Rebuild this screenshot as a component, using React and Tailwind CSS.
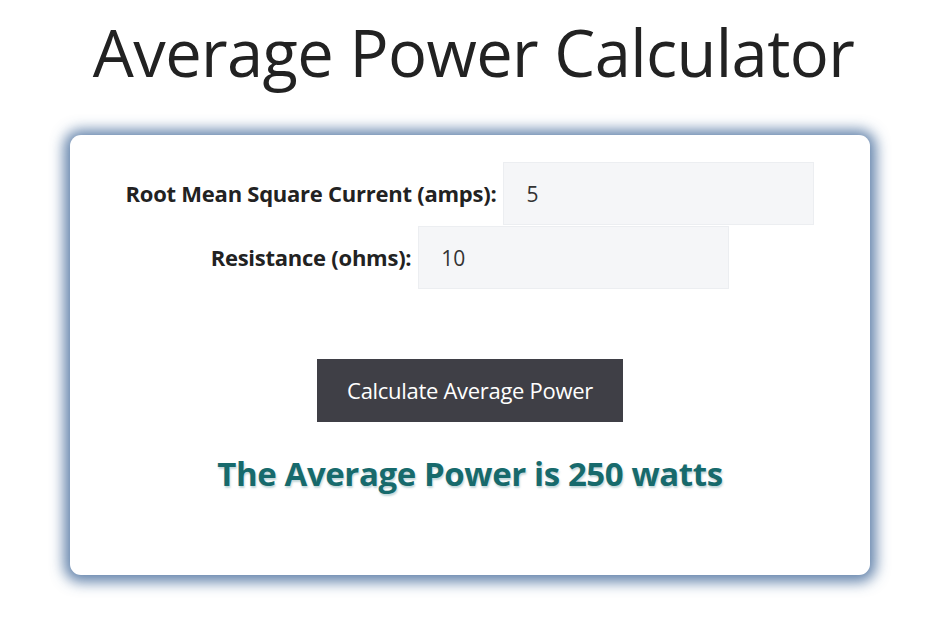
import { useState } from "react";

const font = { fontFamily: '"Open Sans", "Noto Sans", sans-serif' };

const Field = ({ label, value, onChange }) => (
  <div className="flex items-center justify-center">
    <label className="text-[22px] font-bold text-[#222] mr-[7px] tracking-[-0.25px]">{label}</label>
    <input
      type="text"
      value={value}
      onChange={onChange}
      className="w-[311px] h-[63px] px-[22px] text-[21px] text-[#333] bg-[#f5f6f8] border border-[#eceef1] outline-none"
    />
  </div>
);

export default function App() {
  const [current, setCurrent] = useState("5");
  const [resistance, setResistance] = useState("10");
  const [power, setPower] = useState(250);

  const calculate = () => {
    const i = parseFloat(current) || 0;
    const r = parseFloat(resistance) || 0;
    setPower(i * i * r);
  };

  return (
    <div className="min-h-screen bg-white pb-10" style={font}>
      <h1 className="text-center text-[65px] leading-none text-[#222] pt-[20px] tracking-[-0.6px]">
        Average Power Calculator
      </h1>

      <div className="ml-[70px] mt-[50px] w-[800px] h-[440px] bg-white rounded-[11px] shadow-[0_1px_14px_6px_rgba(60,100,150,0.8)] pt-[27px] flex flex-col items-center">
        <div className="flex flex-col gap-px">
          <Field label="Root Mean Square Current (amps):" value={current} onChange={(e) => setCurrent(e.target.value)} />
          <Field label="Resistance (ohms):" value={resistance} onChange={(e) => setResistance(e.target.value)} />
        </div>

        <button
          onClick={calculate}
          className="mt-[70px] w-[306px] h-[63px] bg-[#3f3f46] text-white text-[22px] tracking-[-0.3px]"
        >
          Calculate Average Power
        </button>

        <p className="mt-[27px] text-[33px] font-bold text-[#176a6c] [text-shadow:1px_2px_2px_rgba(80,140,150,0.35)] tracking-[-0.4px]">
          The Average Power is {power} watts
        </p>
      </div>
    </div>
  );
}
